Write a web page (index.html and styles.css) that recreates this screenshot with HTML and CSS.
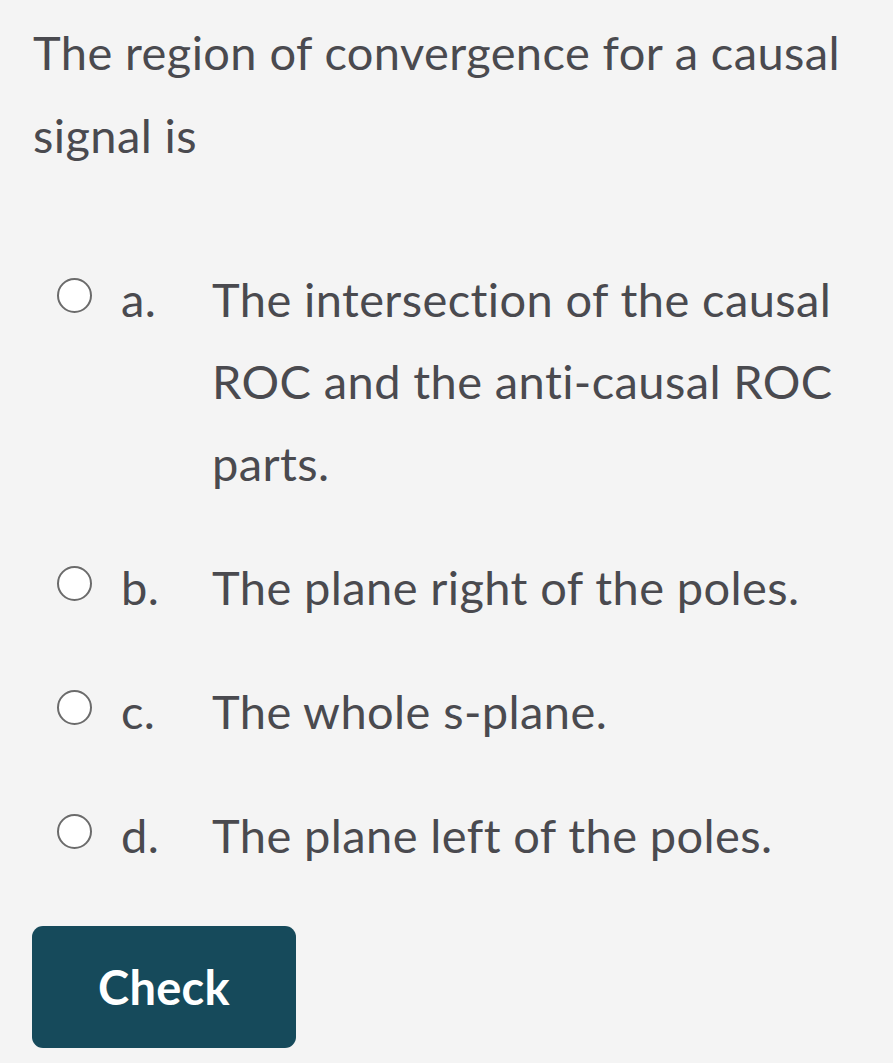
FILE: index.html
```html
<!DOCTYPE html>
<html lang="en">
<head>
<meta charset="utf-8">
<title>Question</title>
<link rel="stylesheet" href="styles.css">
</head>
<body>
<div class="page">
  <div class="question">The region of convergence for a causal signal is</div>
  <div class="answers">
    <label class="answer">
      <span class="radio"></span>
      <span class="letter">a.</span>
      <span class="text">The intersection of the causal ROC and the anti-causal ROC parts.</span>
    </label>
    <label class="answer">
      <span class="radio"></span>
      <span class="letter">b.</span>
      <span class="text">The plane right of the poles.</span>
    </label>
    <label class="answer">
      <span class="radio"></span>
      <span class="letter">c.</span>
      <span class="text">The whole s-plane.</span>
    </label>
    <label class="answer">
      <span class="radio"></span>
      <span class="letter">d.</span>
      <span class="text">The plane left of the poles.</span>
    </label>
  </div>
  <button class="check" type="button">Check</button>
</div>
</body>
</html>
```
FILE: styles.css
```css
html, body {
  margin: 0;
  padding: 0;
  background: #f4f4f4;
}
body {
  font-family: "Lato", "Open Sans", sans-serif;
  color: #4a4a4f;
  letter-spacing: 0.4px;
}
.page {
  padding: 11px 40px 0 33px;
}
.question {
  font-size: 47px;
  line-height: 83px;
  margin: 0;
}
.answers {
  margin-top: 81px;
  padding-left: 24px;
  display: flex;
  flex-direction: column;
  gap: 42px;
}
.answer {
  display: flex;
  align-items: flex-start;
  font-size: 47px;
  line-height: 82px;
}
.radio {
  flex: none;
  width: 31px;
  height: 31px;
  margin-top: 20px;
  border: 2.5px solid #6b6b6b;
  border-radius: 50%;
  background: #ffffff;
}
.letter {
  flex: none;
  width: 91px;
  margin-left: 29px;
}
.text {
  flex: 1;
}
.check {
  display: block;
  margin-top: 50px;
  width: 264px;
  height: 122px;
  border: none;
  border-radius: 11px;
  background: #164a5b;
  color: #ffffff;
  font-family: "Lato", "Open Sans", sans-serif;
  font-weight: 700;
  font-size: 47px;
  letter-spacing: 0.3px;
  padding: 0;
  margin-left: -1px;
}
```
